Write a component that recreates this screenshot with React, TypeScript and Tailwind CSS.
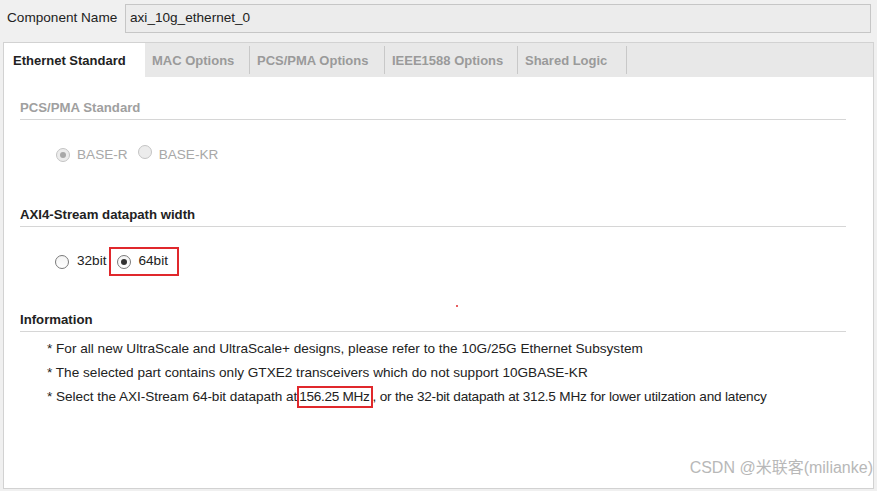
import React from "react";

function Radio({ checked, disabled }: { checked?: boolean; disabled?: boolean }) {
  return (
    <span
      className={
        "inline-flex items-center justify-center w-[14px] h-[14px] rounded-full border shrink-0 " +
        (disabled
          ? "border-[#c4c4c4] bg-[#ececec]"
          : "border-[#7a7a7a] bg-gradient-to-b from-[#f4f4f4] to-[#ffffff]")
      }
    >
      {checked && (
        <span
          className={
            "w-[6px] h-[6px] rounded-full " + (disabled ? "bg-[#a8a8a8]" : "bg-[#333333]")
          }
        />
      )}
    </span>
  );
}

function Header({ children, muted }: { children: React.ReactNode; muted?: boolean }) {
  return (
    <div
      className={
        "h-[20px] w-[826px] border-b border-[#d6d6d6] flex items-start leading-[16px] text-[13.2px] font-bold " +
        (muted ? "text-[#a0a0a0]" : "text-[#222222]")
      }
    >
      {children}
    </div>
  );
}

const tabs = [
  { label: "Ethernet Standard", w: "w-[141px]", active: true },
  { label: "MAC Options", w: "w-[105px]" },
  { label: "PCS/PMA Options", w: "w-[135px]" },
  { label: "IEEE1588 Options", w: "w-[133px]" },
  { label: "Shared Logic", w: "w-[109px]" },
];

export default function App() {
  return (
    <div
      className="relative w-[877px] h-[491px] overflow-hidden bg-[#f0f0f0] text-[#222222]"
      style={{ fontFamily: '"Liberation Sans", Arial, "Noto Sans CJK SC", sans-serif' }}
    >
      <div className="h-[36px] flex items-center pl-[7px]">
        <span className="text-[13.6px] w-[118px]">Component Name</span>
        <div className="w-[746px] h-[29px] border border-[#c6c6c6] bg-[#ececec] flex items-center pl-[4px] text-[13.6px]">
          axi_10g_ethernet_0
        </div>
      </div>

      <div className="ml-[3px] mt-[6px] w-[871px] h-[447px] border border-[#d2d2d2] bg-white flex flex-col">
        <div className="h-[34px] bg-[#e8e8e8] flex items-stretch">
          {tabs.map((t) =>
            t.active ? (
              <div
                key={t.label}
                className={t.w + " bg-white flex items-center pl-[9px] pt-[1px] text-[13px] font-bold text-[#222222]"}
              >
                {t.label}
              </div>
            ) : (
              <div key={t.label} className={t.w + " flex items-center pl-[7px] py-[3px]"}>
                <div className="h-full w-full flex items-center pt-[1px] border-r border-[#c8c8c8] text-[13px] font-bold text-[#9a9a9a]">
                  {t.label}
                </div>
              </div>
            )
          )}
        </div>

        <div className="pl-[16px] flex flex-col">
          <div className="mt-[23px]">
            <Header muted>PCS/PMA Standard</Header>
          </div>
          <div className="mt-[25px] h-[20px] flex items-center pl-[36px] text-[13.6px] text-[#a8a8a8]">
            <Radio checked disabled />
            <span className="ml-[7px]">BASE-R</span>
            <span className="ml-[10px]">
              <Radio disabled />
            </span>
            <span className="ml-[7px]">BASE-KR</span>
          </div>

          <div className="mt-[42px]">
            <Header>AXI4-Stream datapath width</Header>
          </div>
          <div className="mt-[20px] h-[29px] flex items-center pl-[35px] text-[13.6px]">
            <Radio />
            <span className="ml-[8px]">32bit</span>
            <div className="ml-[3px] h-[29px] w-[70px] border-2 border-[#e0282c] flex items-center pl-[6px]">
              <Radio checked />
              <span className="ml-[7px]">64bit</span>
            </div>
          </div>

          <div className="mt-[36px]">
            <Header>Information</Header>
          </div>
          <div className="mt-[5px] pl-[27px] text-[13.6px] leading-[24px] text-[#222222]">
            <div>* For all new UltraScale and UltraScale+ designs, please refer to the 10G/25G Ethernet Subsystem</div>
            <div>* The selected part contains only GTXE2 transceivers which do not support 10GBASE-KR</div>
            <div className="flex items-center">
              <span className="whitespace-pre tracking-[-0.05px]">* Select the AXI-Stream 64-bit datapath at</span>
              <span className="border-2 border-[#e0282c] h-[22px] flex items-center tracking-[-0.3px] pr-[1px]">156.25 MHz</span>
              <span className="whitespace-pre tracking-[-0.2px]">, or the 32-bit datapath at 312.5 MHz for lower utilzation and latency</span>
            </div>
          </div>
        </div>
      </div>

      <div className="absolute left-[456px] top-[305px] w-[2px] h-[2px] rounded-full bg-[#e0282c]" />
      <div className="absolute right-[4px] top-[457px] text-[16px] text-[#b8b8b8] leading-[22px]">
        CSDN @米联客(milianke)
      </div>
    </div>
  );
}
